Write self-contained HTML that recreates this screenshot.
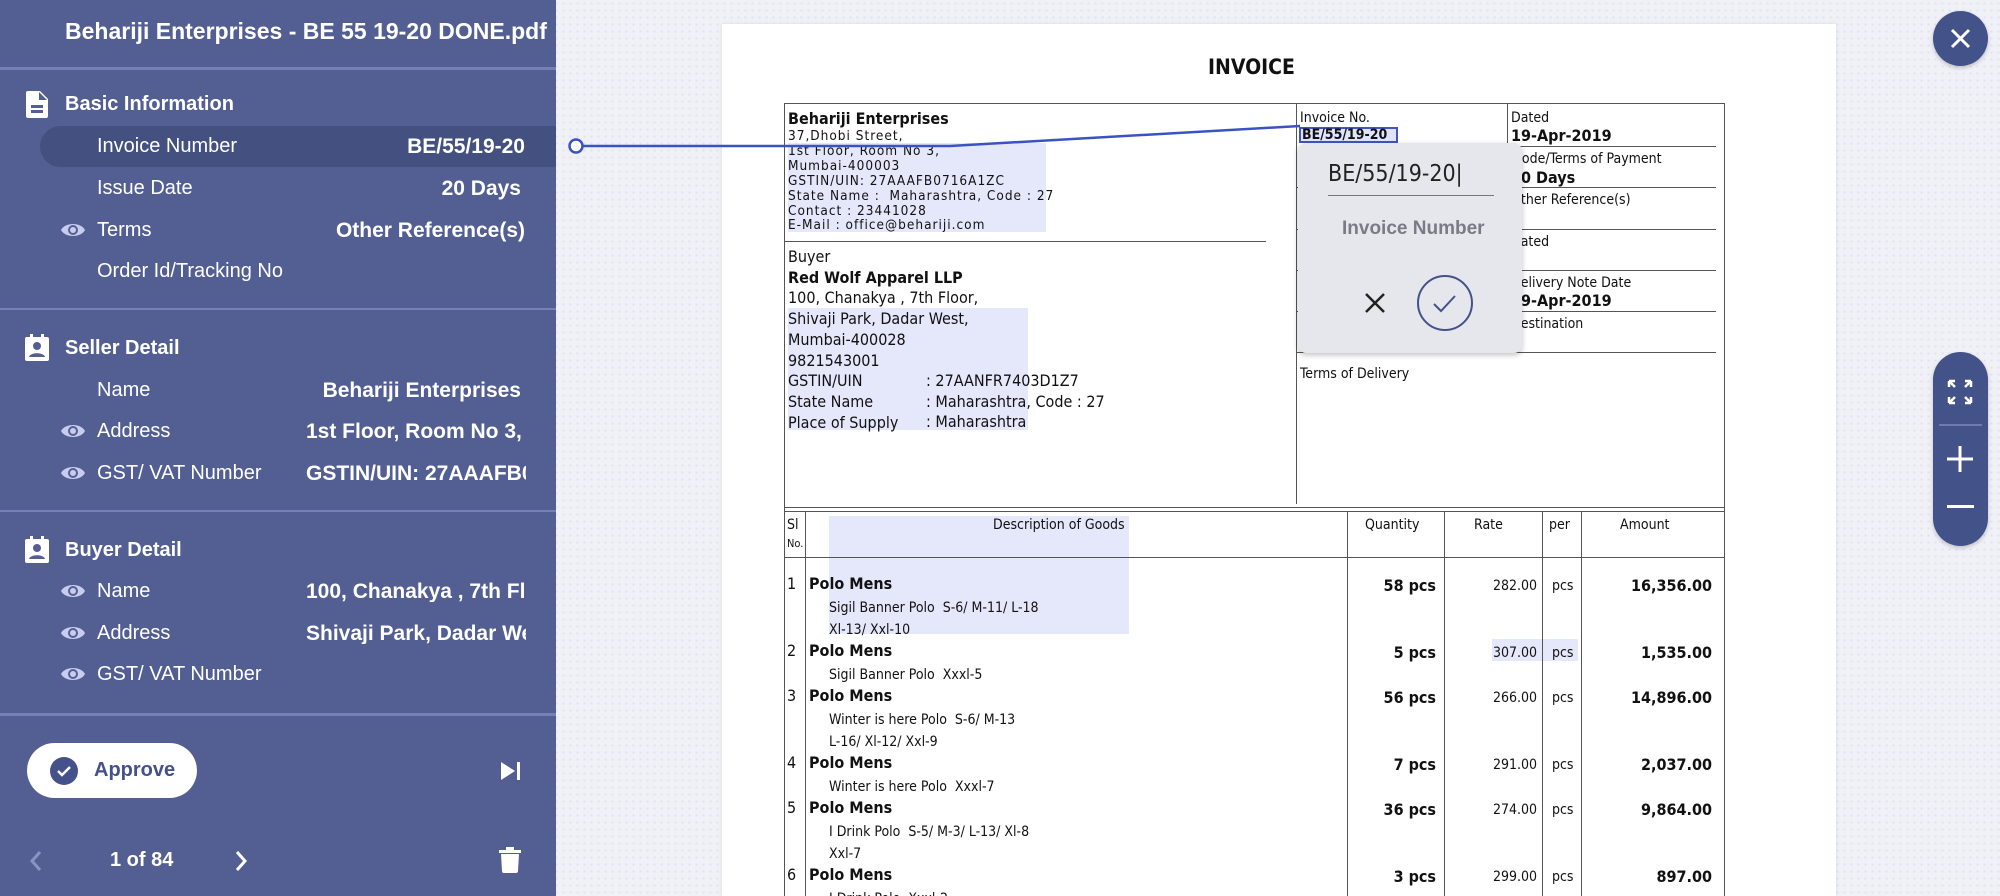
<!DOCTYPE html>
<html style="width:2000px;height:896px;overflow:hidden"><head><meta charset="utf-8"><style>
*{margin:0;padding:0;box-sizing:border-box}
body{width:2000px;height:896px;overflow:hidden;position:relative;background:#eff1f7;background-image:radial-gradient(#dfe2ee 1px,transparent 1.2px);background-size:7px 7px;font-family:"Liberation Sans",sans-serif}
.t{position:absolute;white-space:nowrap;line-height:1}
#sb{position:absolute;left:0;top:0;width:556px;height:896px;background:#535f93;color:#fff;overflow:hidden}
.lab{font-size:20px;color:#fff}
.val{font-size:21px;font-weight:bold;text-align:right}
.hd{font-size:20px;font-weight:bold}
.sep{position:absolute;left:0;width:556px;height:2px;background:#7481b6}
.doc{font-family:"DejaVu Sans Condensed","DejaVu Sans",sans-serif;color:#111}
.ln{position:absolute;background:#555}
.hl{position:absolute;background:#e5e8fb}
</style></head><body>
<div id="sb">
<div class="t" style="left:65px;top:20px;font-size:23px;font-weight:bold">Behariji Enterprises - BE 55 19-20 DONE.pdf</div>
<div class="sep" style="top:67px;height:3px"></div>
<svg style="position:absolute;left:26px;top:91px" width="22" height="27" viewBox="0 0 22 27"><path d="M2 0h12l8 8v17a2 2 0 0 1-2 2H2a2 2 0 0 1-2-2V2a2 2 0 0 1 2-2z" fill="#fff"/><path d="M13 1v8h8" fill="#535f93"/><rect x="5" y="14" width="12" height="3" fill="#535f93"/><rect x="5" y="19" width="12" height="3" fill="#535f93"/></svg>
<div class="t hd" style="left:65px;top:94px">Basic Information</div>
<div style="position:absolute;left:40px;top:126px;width:530px;height:41px;background:#44507f;border-radius:21px 0 0 21px"></div>
<div class="t lab" style="left:97px;top:136px">Invoice Number</div>
<div class="t val" style="right:31px;top:136px">BE/55/19-20</div>
<div class="t lab" style="left:97px;top:178px">Issue Date</div>
<div class="t val" style="right:35px;top:178px">20 Days</div>
<div class="t lab" style="left:97px;top:220px">Terms</div>
<div class="t val" style="right:31px;top:220px">Other Reference(s)</div>
<div class="t lab" style="left:97px;top:261px">Order Id/Tracking No</div>
<div class="sep" style="top:308px"></div>
<svg style="position:absolute;left:25px;top:334px" width="24" height="27" viewBox="0 0 24 27"><rect x="0" y="3" width="24" height="24" rx="2" fill="#fff"/><rect x="5" y="0" width="3" height="6" fill="#fff"/><rect x="16" y="0" width="3" height="6" fill="#fff"/><circle cx="12" cy="12" r="4" fill="#535f93"/><path d="M4 23c1-5 15-5 16 0z" fill="#535f93"/></svg>
<div class="t hd" style="left:65px;top:338px">Seller Detail</div>
<div class="t lab" style="left:97px;top:380px">Name</div>
<div class="t val" style="right:35px;top:380px">Behariji Enterprises</div>
<div class="t lab" style="left:97px;top:421px">Address</div>
<div class="t val" style="left:306px;top:421px;width:220px;overflow:hidden;text-align:left">1st Floor, Room No 3, Mumbai</div>
<div class="t lab" style="left:97px;top:463px">GST/ VAT Number</div>
<div class="t val" style="left:306px;top:463px;width:220px;overflow:hidden;text-align:left">GSTIN/UIN: 27AAAFB0716A1ZC</div>
<div class="sep" style="top:510px"></div>
<svg style="position:absolute;left:25px;top:536px" width="24" height="27" viewBox="0 0 24 27"><rect x="0" y="3" width="24" height="24" rx="2" fill="#fff"/><rect x="5" y="0" width="3" height="6" fill="#fff"/><rect x="16" y="0" width="3" height="6" fill="#fff"/><circle cx="12" cy="12" r="4" fill="#535f93"/><path d="M4 23c1-5 15-5 16 0z" fill="#535f93"/></svg>
<div class="t hd" style="left:65px;top:540px">Buyer Detail</div>
<div class="t lab" style="left:97px;top:581px">Name</div>
<div class="t val" style="left:306px;top:581px;width:220px;overflow:hidden;text-align:left">100, Chanakya , 7th Floor,</div>
<div class="t lab" style="left:97px;top:623px">Address</div>
<div class="t val" style="left:306px;top:623px;width:220px;overflow:hidden;text-align:left">Shivaji Park, Dadar West,</div>
<div class="t lab" style="left:97px;top:664px">GST/ VAT Number</div>
<div class="sep" style="top:713px;height:3px"></div>
<svg style="position:absolute;left:0;top:0" width="100" height="700">
<g fill="#c8cdf0">
<g transform="translate(73,230)"><path d="M-12 0C-8-8 8-8 12 0C8 8-8 8-12 0z"/><circle r="5" fill="#535f93"/><circle r="3"/></g>
<g transform="translate(73,431)"><path d="M-12 0C-8-8 8-8 12 0C8 8-8 8-12 0z"/><circle r="5" fill="#535f93"/><circle r="3"/></g>
<g transform="translate(73,473)"><path d="M-12 0C-8-8 8-8 12 0C8 8-8 8-12 0z"/><circle r="5" fill="#535f93"/><circle r="3"/></g>
<g transform="translate(73,591)"><path d="M-12 0C-8-8 8-8 12 0C8 8-8 8-12 0z"/><circle r="5" fill="#535f93"/><circle r="3"/></g>
<g transform="translate(73,633)"><path d="M-12 0C-8-8 8-8 12 0C8 8-8 8-12 0z"/><circle r="5" fill="#535f93"/><circle r="3"/></g>
<g transform="translate(73,674)"><path d="M-12 0C-8-8 8-8 12 0C8 8-8 8-12 0z"/><circle r="5" fill="#535f93"/><circle r="3"/></g>
</g></svg>
<div style="position:absolute;left:27px;top:743px;width:170px;height:55px;background:#fff;border-radius:28px"></div>
<svg style="position:absolute;left:50px;top:757px" width="28" height="28"><circle cx="14" cy="14" r="14" fill="#45518a"/><path d="M8 14l4 4 8-8" stroke="#fff" stroke-width="2.5" fill="none"/></svg>
<div class="t" style="left:94px;top:760px;font-size:20px;font-weight:bold;color:#45518a">Approve</div>
<svg style="position:absolute;left:500px;top:761px" width="22" height="20"><path d="M1 1l14 9-14 9z" fill="#fff"/><rect x="17" y="1" width="3" height="18" fill="#fff"/></svg>
<svg style="position:absolute;left:28px;top:850px" width="16" height="22"><path d="M12 2L4 11l8 9" stroke="#8a94c0" stroke-width="3" fill="none"/></svg>
<div class="t" style="left:110px;top:850px;font-size:20px;font-weight:bold">1 of 84</div>
<svg style="position:absolute;left:233px;top:850px" width="16" height="22"><path d="M4 2l8 9-8 9" stroke="#fff" stroke-width="3" fill="none"/></svg>
<svg style="position:absolute;left:499px;top:847px" width="22" height="26"><rect x="0" y="3" width="22" height="3" fill="#fff"/><rect x="7" y="0" width="8" height="4" fill="#fff"/><path d="M2 7h18l-1 17a2 2 0 0 1-2 2H5a2 2 0 0 1-2-2z" fill="#fff"/></svg>
</div>

<div style="position:absolute;left:722px;top:24px;width:1114px;height:872px;background:#fff;box-shadow:0 0 4px rgba(0,0,0,.08)"></div>
<div class="doc" style="position:absolute;left:0;top:0;width:2000px;height:896px;overflow:hidden">
<div class="t" style="left:1208px;top:57px;font-size:21px;font-weight:bold">INVOICE</div>
<div class="hl" style="left:788px;top:143px;width:258px;height:89px"></div>
<div class="hl" style="left:788px;top:308px;width:240px;height:122px"></div>
<div class="hl" style="left:829px;top:516px;width:300px;height:118px"></div>
<div class="hl" style="left:1492px;top:639px;width:86px;height:22px"></div>
<div class="ln" style="left:784px;top:103px;width:941px;height:1px"></div>
<div class="ln" style="left:784px;top:103px;width:1px;height:793px"></div>
<div class="ln" style="left:1724px;top:103px;width:1px;height:793px"></div>
<div class="ln" style="left:1296px;top:103px;width:1px;height:401px"></div>
<div class="ln" style="left:1507px;top:103px;width:1px;height:250px"></div>
<div class="ln" style="left:784px;top:241px;width:482px;height:1px"></div>
<div class="ln" style="left:1507px;top:146px;width:209px;height:1px"></div>
<div class="ln" style="left:1297px;top:187px;width:419px;height:1px"></div>
<div class="ln" style="left:1297px;top:229px;width:419px;height:1px"></div>
<div class="ln" style="left:1297px;top:270px;width:419px;height:1px"></div>
<div class="ln" style="left:1297px;top:311px;width:419px;height:1px"></div>
<div class="ln" style="left:1297px;top:352px;width:419px;height:1px"></div>
<div class="ln" style="left:784px;top:507px;width:941px;height:1px"></div>
<div class="ln" style="left:784px;top:511px;width:941px;height:1px"></div>
<div class="ln" style="left:784px;top:557px;width:941px;height:1px"></div>
<div class="ln" style="left:805px;top:511px;width:1px;height:385px"></div>
<div class="ln" style="left:1347px;top:511px;width:1px;height:385px"></div>
<div class="ln" style="left:1444px;top:511px;width:1px;height:385px"></div>
<div class="ln" style="left:1542px;top:511px;width:1px;height:385px"></div>
<div class="ln" style="left:1581px;top:511px;width:1px;height:385px"></div>
<div class="t" style="left:788px;top:111px;font-size:16px;font-weight:bold">Behariji Enterprises</div>
<div style="position:absolute;left:788px;top:129px;font-size:13.5px;line-height:14.9px;letter-spacing:1px">37,Dhobi Street,<br>1st Floor, Room No 3,<br>Mumbai-400003<br>GSTIN/UIN: 27AAAFB0716A1ZC<br>State Name :&nbsp; Maharashtra, Code : 27<br>Contact : 23441028<br>E-Mail : office@behariji.com</div>
<div style="position:absolute;left:788px;top:247px;font-size:16px;line-height:20.7px">Buyer<br><b>Red Wolf Apparel LLP</b><br>100, Chanakya , 7th Floor,<br>Shivaji Park, Dadar West,<br>Mumbai-400028<br>9821543001<br>GSTIN/UIN<br>State Name<br>Place of Supply</div>
<div style="position:absolute;left:926px;top:371px;font-size:16px;line-height:20.7px">: 27AANFR7403D1Z7<br>: Maharashtra, Code : 27<br>: Maharashtra</div>
<div class="t" style="left:1300px;top:111px;font-size:14px">Invoice No.</div>
<div class="t" style="left:1511px;top:111px;font-size:14px">Dated</div>
<div class="t" style="left:1511px;top:128px;font-size:16px;font-weight:bold">19-Apr-2019</div>
<div class="t" style="left:1511px;top:152px;font-size:14px">Mode/Terms of Payment</div>
<div class="t" style="left:1511px;top:170px;font-size:16px;font-weight:bold">20 Days</div>
<div class="t" style="left:1511px;top:193px;font-size:14px">Other Reference(s)</div>
<div class="t" style="left:1511px;top:235px;font-size:14px">Dated</div>
<div class="t" style="left:1511px;top:276px;font-size:14px">Delivery Note Date</div>
<div class="t" style="left:1511px;top:293px;font-size:16px;font-weight:bold">19-Apr-2019</div>
<div class="t" style="left:1511px;top:317px;font-size:14px">Destination</div>
<div class="t" style="left:1300px;top:367px;font-size:14px">Terms of Delivery</div>
<div style="position:absolute;left:1299px;top:127px;width:99px;height:16px;border:2px solid #3f56c0;background:#dfe4fb"></div>
<div class="t" style="left:1302px;top:128px;font-size:14px;font-weight:bold">BE/55/19-20</div>
<div class="t" style="left:787px;top:518px;font-size:14px">Sl</div>
<div class="t" style="left:787px;top:538px;font-size:11px">No.</div>
<div class="t" style="left:993px;top:518px;font-size:14px">Description of Goods</div>
<div class="t" style="left:1365px;top:518px;font-size:14px">Quantity</div>
<div class="t" style="left:1474px;top:518px;font-size:14px">Rate</div>
<div class="t" style="left:1549px;top:518px;font-size:14px">per</div>
<div class="t" style="left:1620px;top:518px;font-size:14px">Amount</div>
<div style="position:absolute;left:787px;top:573px;font-size:16px;line-height:22.4px">1<br><br><br>2<br><br>3<br><br><br>4<br><br>5<br><br><br>6</div>
<div style="position:absolute;left:809px;top:573px;font-size:16px;line-height:22.4px;font-weight:bold">Polo Mens<br><br><br>Polo Mens<br><br>Polo Mens<br><br><br>Polo Mens<br><br>Polo Mens<br><br><br>Polo Mens</div>
<div style="position:absolute;left:829px;top:597px;font-size:14px;line-height:22.4px">Sigil Banner Polo&nbsp; S-6/ M-11/ L-18<br>Xl-13/ Xxl-10<br><br>Sigil Banner Polo&nbsp; Xxxl-5<br><br>Winter is here Polo&nbsp; S-6/ M-13<br>L-16/ Xl-12/ Xxl-9<br><br>Winter is here Polo&nbsp; Xxxl-7<br><br>I Drink Polo&nbsp; S-5/ M-3/ L-13/ Xl-8<br>Xxl-7<br><br>I Drink Polo&nbsp; Xxxl-2</div>
<div style="position:absolute;left:1340px;width:96px;text-align:right;top:575px;font-size:16px;line-height:22.4px;font-weight:bold">58 pcs<br><br><br>5 pcs<br><br>56 pcs<br><br><br>7 pcs<br><br>36 pcs<br><br><br>3 pcs</div>
<div style="position:absolute;left:1440px;width:97px;text-align:right;top:575px;font-size:14px;line-height:22.4px">282.00<br><br><br>307.00<br><br>266.00<br><br><br>291.00<br><br>274.00<br><br><br>299.00</div>
<div style="position:absolute;left:1552px;top:575px;font-size:14px;line-height:22.4px">pcs<br><br><br>pcs<br><br>pcs<br><br><br>pcs<br><br>pcs<br><br><br>pcs</div>
<div style="position:absolute;left:1600px;width:112px;text-align:right;top:575px;font-size:16px;line-height:22.4px;font-weight:bold">16,356.00<br><br><br>1,535.00<br><br>14,896.00<br><br><br>2,037.00<br><br>9,864.00<br><br><br>897.00</div>
</div>
<svg style="position:absolute;left:0;top:0" width="2000" height="896"><path d="M582 146H950L1300 126" stroke="#3a52c4" stroke-width="2.5" fill="none"/><circle cx="576" cy="146" r="6.5" fill="#fff" stroke="#3a52c4" stroke-width="2.5"/></svg>
<div style="position:absolute;left:1298px;top:143px;width:224px;height:210px;background:#e6e7ec;border-radius:8px;box-shadow:0 2px 6px rgba(0,0,0,.25)"></div>
<div class="t" style="left:1328px;top:163px;font-size:23px;color:#222;font-family:'DejaVu Sans Condensed','Liberation Sans',sans-serif">BE/55/19-20<span style="font-weight:100">|</span></div>
<div style="position:absolute;left:1328px;top:195px;width:166px;height:1px;background:#777"></div>
<div class="t" style="left:1342px;top:219px;font-size:19px;font-weight:bold;color:#7a7b85">Invoice Number</div>
<svg style="position:absolute;left:1362px;top:290px" width="26" height="26"><path d="M4 4l18 18M22 4L4 22" stroke="#222" stroke-width="2.5"/></svg>
<svg style="position:absolute;left:1416px;top:274px" width="58" height="58"><circle cx="29" cy="29" r="27" fill="none" stroke="#45518a" stroke-width="2"/><path d="M18 30l7 7 14-15" stroke="#45518a" stroke-width="2" fill="none"/></svg>
<div style="position:absolute;left:1933px;top:11px;width:55px;height:55px;border-radius:50%;background:#44528a;box-shadow:0 2px 4px rgba(0,0,0,.2)"></div>
<svg style="position:absolute;left:1948px;top:26px" width="25" height="25"><path d="M4 4l17 17M21 4L4 21" stroke="#fff" stroke-width="3"/></svg>
<div style="position:absolute;left:1933px;top:352px;width:55px;height:194px;border-radius:28px;background:#44528a;box-shadow:0 2px 4px rgba(0,0,0,.2)"></div>
<div style="position:absolute;left:1939px;top:424px;width:43px;height:2px;background:#6f7bb0"></div>
<svg style="position:absolute;left:1946px;top:378px" width="28" height="28" stroke="#fff" stroke-width="2.5" fill="none"><path d="M3 3l6 6M3 3v6M3 3h6M25 3l-6 6M25 3v6M25 3h-6M3 25l6-6M3 25v-6M3 25h6M25 25l-6-6M25 25v-6M25 25h-6"/></svg>
<svg style="position:absolute;left:1946px;top:445px" width="28" height="28"><path d="M14 1v26M1 14h26" stroke="#fff" stroke-width="3"/></svg>
<div style="position:absolute;left:1947px;top:505px;width:27px;height:3px;background:#fff"></div>
</body></html>
